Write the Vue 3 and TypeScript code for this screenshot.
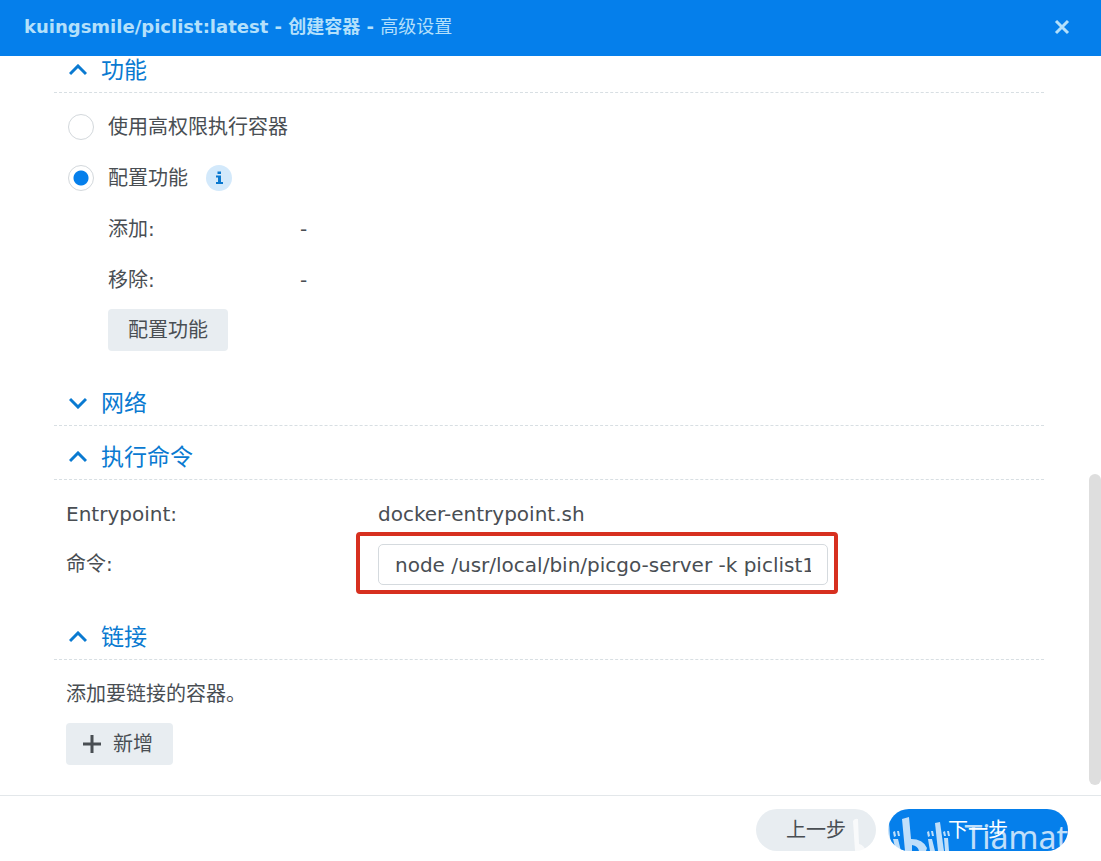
<script setup lang="ts">
import { ref } from 'vue'

const mode = ref('caps')
const command = ref('node /usr/local/bin/picgo-server -k piclist123456')
const open = ref({ caps: true, network: false, command: true, links: true })
</script>

<template>
  <div class="dialog">
    <header class="titlebar">
      <h1><b>kuingsmile/piclist:latest - 创建容器 - </b>高级设置</h1>
      <button class="close" type="button" aria-label="关闭">
        <svg width="16" height="16" viewBox="0 0 16 16"><path d="M2 2L14 14M14 2L2 14" /></svg>
      </button>
    </header>

    <main class="content">
      <section class="caps">
        <h2>
          <button type="button" :aria-expanded="open.caps" @click="open.caps = !open.caps">
            <svg width="18" height="12" viewBox="0 0 18 12" :class="{ down: !open.caps }"><path d="M1 10L9 2L17 10" /></svg>
            功能
          </button>
        </h2>
        <div v-if="open.caps" class="body">
          <div class="row">
            <input id="priv" v-model="mode" type="radio" value="priv" />
            <label for="priv">使用高权限执行容器</label>
          </div>
          <div class="row">
            <input id="caps" v-model="mode" type="radio" value="caps" />
            <label for="caps">配置功能</label>
            <span class="info">
              <svg width="26" height="26" viewBox="0 0 26 26">
                <path d="M11.500 6.500h3.500v2.500h-3.500zM10 10.500h5v6.500h2v2h-7v-2h2v-4.500h-2z" />
              </svg>
            </span>
          </div>
          <dl>
            <div class="row"><dt>添加:</dt><dd>-</dd></div>
            <div class="row"><dt>移除:</dt><dd>-</dd></div>
          </dl>
          <button class="btn indent-btn" type="button">配置功能</button>
        </div>
      </section>

      <section class="network">
        <h2>
          <button type="button" :aria-expanded="open.network" @click="open.network = !open.network">
            <svg width="18" height="12" viewBox="0 0 18 12" :class="{ down: !open.network }"><path d="M1 10L9 2L17 10" /></svg>
            网络
          </button>
        </h2>
      </section>

      <section class="command">
        <h2>
          <button type="button" :aria-expanded="open.command" @click="open.command = !open.command">
            <svg width="18" height="12" viewBox="0 0 18 12" :class="{ down: !open.command }"><path d="M1 10L9 2L17 10" /></svg>
            执行命令
          </button>
        </h2>
        <div v-if="open.command" class="body">
          <div class="row field"><span>Entrypoint:</span><span>docker-entrypoint.sh</span></div>
          <div class="row field">
            <label for="cmd">命令:</label>
            <div class="highlight"><input id="cmd" v-model="command" type="text" /></div>
          </div>
        </div>
      </section>

      <section class="links">
        <h2>
          <button type="button" :aria-expanded="open.links" @click="open.links = !open.links">
            <svg width="18" height="12" viewBox="0 0 18 12" :class="{ down: !open.links }"><path d="M1 10L9 2L17 10" /></svg>
            链接
          </button>
        </h2>
        <div v-if="open.links" class="body">
          <p class="row">添加要链接的容器。</p>
          <button class="btn add" type="button">
            <svg width="18" height="18" viewBox="0 0 18 18"><path d="M9 0V18M0 9H18" /></svg>
            新增
          </button>
        </div>
      </section>
      <div class="scrollbar"></div>
    </main>

    <footer class="footer">
      <button class="pill" type="button">上一步</button>
      <button class="pill primary" type="button">下一步</button>
      <div class="watermark">
        <svg width="112" height="56" viewBox="0 0 112 56">
          <path d="M0 16Q2 13 5 14L6 39Q11 40 13 46H2Z" />
          <path d="M33 18L36 17L38 46H33Z" />
          <path d="M40 34H45L48 46H43ZM40 27L42 26L43 31L41 32ZM44 26L46 26L47 31L45 31Z" />
          <path fill-rule="evenodd" d="M49 14L56 12L58 34Q70 34 74 43L73 46H52ZM59 40V46H66Q65 41 59 40Z" />
          <path d="M75 34H79L82 46H77ZM74 27L76 26L77 31L75 32ZM78 26L80 26L81 31L79 31Z" />
          <path d="M82 18L87 17L91 46H85Z" />
          <path d="M91 33H95L96 46H92ZM90 27L92 26L93 31L91 31ZM94 26L96 26L97 31L95 31Z" />
        </svg>
        <span>Tiamat</span>
      </div>
    </footer>
  </div>
</template>

<style>
body {
  margin: 0;
}
</style>

<style scoped>
* {
  box-sizing: border-box;
}
.dialog {
  display: flex;
  flex-direction: column;
  min-height: 100vh;
  background: #fff;
  color: #494e53;
  font: 20px/28px "DejaVu Sans", "Noto Sans CJK SC", sans-serif;
}
button,
input {
  font: inherit;
  color: inherit;
}
button {
  border: 0;
  padding: 0;
  background: none;
  cursor: pointer;
}
svg {
  fill: none;
  flex: none;
}
.titlebar {
  display: flex;
  align-items: center;
  justify-content: space-between;
  height: 56px;
  padding: 0 31px 3px 24px;
  background: #057feb;
  color: #b4e0fb;
}
h1 {
  margin: 0;
  font-size: 18px;
  font-weight: 400;
}
.close {
  display: flex;
}
.close svg {
  stroke: #b4e0fb;
  stroke-width: 3;
}
.content {
  position: relative;
  flex: 1;
  padding: 0 57px 30px 54px;
}
h2 {
  display: flex;
  margin: 0;
  height: 54px;
  padding: 0 0 8px 15px;
  align-items: flex-end;
  border-bottom: 1px dashed #d8dfe3;
  color: #0a7ad1;
  font-size: 23px;
  font-weight: 400;
}
h2 button {
  display: flex;
  align-items: center;
  gap: 14px;
}
h2 svg {
  stroke: #0a7ad1;
  stroke-width: 3;
}
h2 svg.down {
  transform: rotate(180deg);
}
.caps h2 {
  height: 37px;
}
.body {
  padding: 8px 12px 0;
}
.row {
  display: flex;
  align-items: center;
  height: 51px;
  margin: 0;
}
input[type="radio"] {
  appearance: none;
  width: 26px;
  height: 26px;
  margin: 0 14px 0 2px;
  border: 1px solid #d3d8dc;
  border-radius: 50%;
}
input[type="radio"]:checked {
  background: radial-gradient(circle, #057feb 7px, #fff 8px);
}
.info {
  display: flex;
  margin-left: 18px;
  border-radius: 50%;
  background: #d3e9fb;
}
.info path {
  fill: #0a78cf;
}
dl {
  margin: 0 0 0 42px;
}
dt {
  width: 192px;
}
dd {
  margin: 0;
}
.btn {
  display: flex;
  align-items: center;
  justify-content: center;
  height: 42px;
  padding: 0 20px;
  border-radius: 4px;
  background: #e8edf1;
}
.indent-btn {
  margin: 4px 0 20px 42px;
}
.network h2 {
  height: 55px;
}
.field > :first-child {
  width: 312px;
}
.highlight {
  display: flex;
  width: 482px;
  margin-top: -7px;
  margin-left: -22px;
  padding: 8px 6px 5px 18px;
  border: 4px solid #d7301f;
  border-radius: 4px;
}
.highlight input {
  width: 100%;
  height: 41px;
  padding: 0 16px;
  border: 1px solid #d5dade;
  border-radius: 5px;
  background: #fff;
}
.command .body {
  padding-bottom: 16px;
}
.command .field:last-child {
  align-items: flex-start;
}
.command .field:last-child label {
  line-height: 51px;
}
.add {
  gap: 12px;
  padding: 0 20px 0 17px;
}
.add svg {
  stroke: #494e53;
  stroke-width: 3;
}
.links .btn {
  margin-top: 4px;
}
.scrollbar {
  position: absolute;
  right: 0;
  top: 418px;
  bottom: 10px;
  width: 12px;
  border-radius: 6px;
  background: #dedede;
}
.footer {
  position: relative;
  display: flex;
  justify-content: flex-end;
  gap: 12px;
  height: 66px;
  padding: 13px 33px 0 0;
  border-top: 1px solid #e3e7ea;
  overflow: hidden;
}
.pill {
  width: 120px;
  height: 42px;
  border-radius: 21px;
  background: #e8edf1;
}
.primary {
  width: 180px;
  background: #057feb;
  color: #fff;
}
.watermark {
  position: absolute;
  right: 33px;
  bottom: 0;
  display: flex;
  align-items: flex-end;
  color: #fff;
  opacity: 0.75;
  font: 32px/48px "Noto Sans", sans-serif;
  pointer-events: none;
}
.watermark path {
  fill: #fff;
}
</style>
